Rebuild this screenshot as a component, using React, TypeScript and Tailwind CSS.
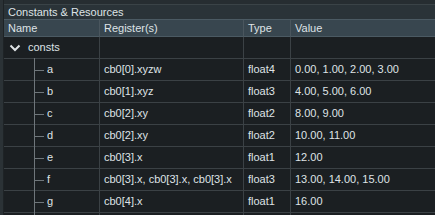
const font = { fontFamily: '"Liberation Sans", Arial, sans-serif' }

const rows = [
  { name: 'a', reg: 'cb0[0].xyzw', type: 'float4', value: '0.00, 1.00, 2.00, 3.00' },
  { name: 'b', reg: 'cb0[1].xyz', type: 'float3', value: '4.00, 5.00, 6.00' },
  { name: 'c', reg: 'cb0[2].xy', type: 'float2', value: '8.00, 9.00' },
  { name: 'd', reg: 'cb0[2].xy', type: 'float2', value: '10.00, 11.00' },
  { name: 'e', reg: 'cb0[3].x', type: 'float1', value: '12.00' },
  { name: 'f', reg: 'cb0[3].x, cb0[3].x, cb0[3].x', type: 'float3', value: '13.00, 14.00, 15.00' },
  { name: 'g', reg: 'cb0[4].x', type: 'float1', value: '16.00' },
]

const cols = 'grid grid-cols-[96px_144px_47px_1fr]'

function Cell({ children, last }: { children?: React.ReactNode; last?: boolean }) {
  return (
    <div className={`h-full flex items-center pl-1 whitespace-nowrap overflow-hidden ${last ? '' : 'border-r border-[#3b4145]'}`}>
      {children}
    </div>
  )
}

export default function App() {
  return (
    <div className="w-[435px] h-[215px] overflow-hidden bg-[#262d31] flex text-[11px] text-[#dfe3e6]" style={font}>
      <div className="w-[4px] shrink-0 bg-[#2b3236] border-r border-[#1e2326]" />
      <div className="flex-1 flex flex-col pt-[4px]">
        <div className="h-[15px] shrink-0 border-t border-[#3a4347] bg-[#2a3338] flex items-center pl-1 leading-none">
          Constants &amp; Resources
        </div>
        <div className={`${cols} h-[18px] shrink-0 bg-[#38464f] border-t border-[#2f393f] border-b border-[#4b5a63]`}>
          {['Name', 'Register(s)', 'Type', 'Value'].map((h, i) => (
            <div key={h} className={`h-full flex items-center pl-1 ${i < 3 ? 'border-r border-[#4a565e]' : ''}`}>
              {h}
            </div>
          ))}
        </div>
        <div className="flex-1 bg-[#1b1f22]">
          <div className={`${cols} h-[22px] border-b border-[#3b4145]`}>
            <Cell>
              <svg width="12" height="8" viewBox="0 0 12 8" className="ml-[1px] mr-[7px]">
                <polyline points="1.5,1.5 6,6 10.5,1.5" fill="none" stroke="#dfe3e6" strokeWidth="2" />
              </svg>
              consts
            </Cell>
            <Cell />
            <Cell />
            <Cell last />
          </div>
          {rows.map((r) => (
            <div key={r.name} className={`${cols} h-[22px] border-b border-[#3b4145]`}>
              <div className="relative h-full flex items-center pl-[43px] border-r border-[#3b4145]">
                <span className="absolute left-[30px] top-[-1px] bottom-[-1px] w-px bg-[#6f767b]" />
                <span className="absolute left-[31px] top-1/2 w-[9px] h-px bg-[#6f767b]" />
                {r.name}
              </div>
              <Cell>{r.reg}</Cell>
              <Cell>{r.type}</Cell>
              <Cell last>{r.value}</Cell>
            </div>
          ))}
          <div className={`${cols} h-[22px]`}>
            <div className="relative h-full border-r border-[#3b4145]">
              <span className="absolute left-[30px] top-[-1px] bottom-0 w-px bg-[#6f767b]" />
            </div>
            <Cell />
            <Cell />
            <Cell last />
          </div>
        </div>
      </div>
    </div>
  )
}
